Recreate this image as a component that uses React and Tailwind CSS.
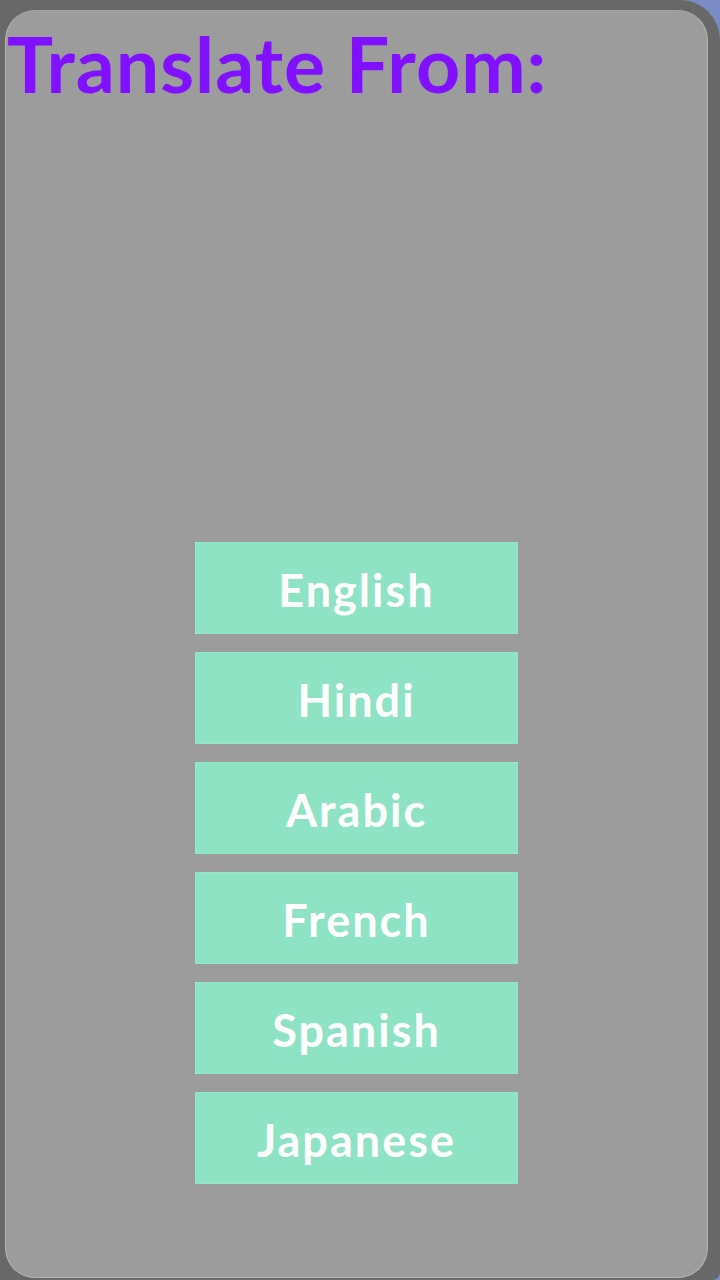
export default function App() {
  const languages = ["English", "Hindi", "Arabic", "French", "Spanish", "Japanese"];
  const font = { fontFamily: '"Lato", "Noto Sans", "Liberation Sans", sans-serif' };

  return (
    <div className="w-[720px] h-[1280px] bg-[#7b8bc6] overflow-hidden" style={font}>
      <div className="h-full bg-[#686868] rounded-tr-[40px] rounded-br-[8px] pt-[10px] pl-[5px] pr-[12px] pb-[2px] flex">
        <div className="flex-1 flex flex-col bg-[#9c9c9c] rounded-[30px] border border-[#b4b4b4] border-t-[#a4a4a4]">
          <h1 className="text-[77px] leading-none font-bold text-[#8010ff] pt-[14px] pl-[1px] tracking-[1px]">
            Translate From:
          </h1>
          <div className="mt-auto mb-[93px] flex flex-col items-center gap-[18px]">
            {languages.map((lang) => (
              <button
                key={lang}
                className="w-[323px] h-[92px] bg-[#8ee3c4] border border-[#96e6c8] text-white font-bold text-[45px] leading-none tracking-[2px] flex items-center justify-center pt-[4px]"
              >
                {lang}
              </button>
            ))}
          </div>
        </div>
      </div>
    </div>
  );
}
